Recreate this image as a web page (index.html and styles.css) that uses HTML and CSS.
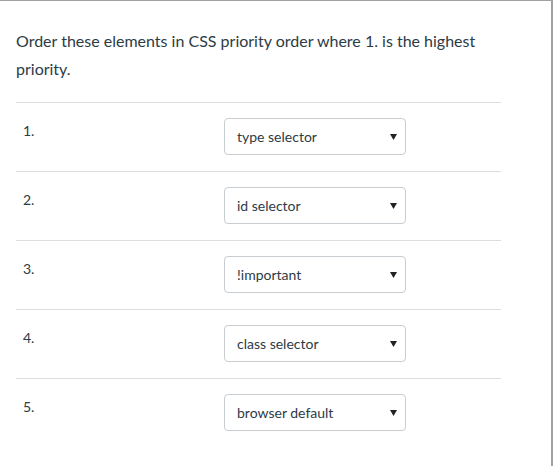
FILE: index.html
```html
<!DOCTYPE html>
<html>
<head>
<meta charset="utf-8">
<link rel="stylesheet" href="styles.css">
</head>
<body>
<div class="frame">
  <div class="question">
    <p class="qtext">Order these elements in CSS priority order where 1. is the highest priority.</p>
    <div class="answers">
      <div class="row">
        <span class="num">1.</span>
        <div class="select"><span class="val">type selector</span><svg class="arrow" width="7" height="6" viewBox="0 0 7 6"><path d="M0 0H7L3.5 6Z" fill="#222"/></svg></div>
      </div>
      <div class="row">
        <span class="num">2.</span>
        <div class="select"><span class="val">id selector</span><svg class="arrow" width="7" height="6" viewBox="0 0 7 6"><path d="M0 0H7L3.5 6Z" fill="#222"/></svg></div>
      </div>
      <div class="row">
        <span class="num">3.</span>
        <div class="select"><span class="val">!important</span><svg class="arrow" width="7" height="6" viewBox="0 0 7 6"><path d="M0 0H7L3.5 6Z" fill="#222"/></svg></div>
      </div>
      <div class="row">
        <span class="num">4.</span>
        <div class="select"><span class="val">class selector</span><svg class="arrow" width="7" height="6" viewBox="0 0 7 6"><path d="M0 0H7L3.5 6Z" fill="#222"/></svg></div>
      </div>
      <div class="row">
        <span class="num">5.</span>
        <div class="select"><span class="val">browser default</span><svg class="arrow" width="7" height="6" viewBox="0 0 7 6"><path d="M0 0H7L3.5 6Z" fill="#222"/></svg></div>
      </div>
    </div>
  </div>
</div>
</body>
</html>
```
FILE: styles.css
```css
html, body {
  margin: 0;
  padding: 0;
  background: #fff;
}
body {
  font-family: Lato, "Open Sans", sans-serif;
  color: #2d3b45;
}
.frame {
  width: 553px;
  height: 466px;
  border-top: 1px solid #a0a0a0;
  border-right: 2px solid #a0a0a0;
  box-sizing: border-box;
  overflow: hidden;
}
.question {
  width: 485px;
  padding: 26px 0 0 16px;
}
.qtext {
  margin: 0 0 19px;
  font-size: 16px;
  line-height: 28px;
}
.row {
  display: flex;
  align-items: flex-start;
  border-top: 1px solid #dcdfe2;
  height: 69px;
  padding-top: 15px;
  box-sizing: border-box;
}
.num {
  width: 201px;
  padding-left: 7px;
  font-size: 14px;
  line-height: 18px;
  padding-top: 4px;
}
.select {
  width: 182px;
  height: 37px;
  box-sizing: border-box;
  border: 1px solid #c7cdd1;
  border-radius: 4px;
  display: flex;
  align-items: center;
  justify-content: space-between;
  padding: 0 8px 0 12px;
  font-size: 14px;
}
.arrow {
  display: block;
}
```
